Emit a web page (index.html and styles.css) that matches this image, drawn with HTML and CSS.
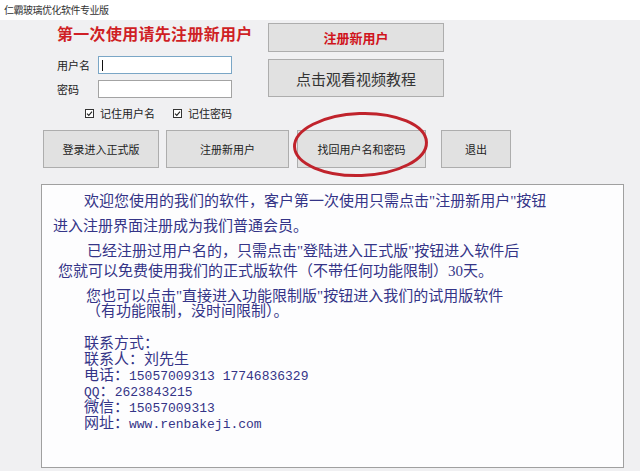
FILE: index.html
```html
<!DOCTYPE html>
<html lang="zh-CN">
<head>
  <meta charset="UTF-8" />
  <title>仁霸玻璃优化软件专业版</title>
  <link rel="stylesheet" href="styles.css">
</head>
<body>

<div class="titlebar">仁霸玻璃优化软件专业版</div>

<div class="window">

  <!-- 登录区 -->
  <div class="top">
    <div class="login">
      <h1 class="headline">第一次使用请先注册新用户</h1>
      <div class="field-row first">
        <label>用户名</label>
        <div class="field focused"><span class="caret"></span></div>
      </div>
      <div class="field-row">
        <label>密码</label>
        <div class="field"></div>
      </div>
      <div class="remember">
        <span class="check">
          <svg width="9" height="9" viewBox="0 0 9 9"><rect x="0.5" y="0.5" width="8" height="8" fill="#fff" stroke="#333"/><path d="M2 4.6 L3.8 6.4 L7 2.6" fill="none" stroke="#222" stroke-width="1.1"/></svg>
          记住用户名
        </span>
        <span class="check">
          <svg width="9" height="9" viewBox="0 0 9 9"><rect x="0.5" y="0.5" width="8" height="8" fill="#fff" stroke="#333"/><path d="M2 4.6 L3.8 6.4 L7 2.6" fill="none" stroke="#222" stroke-width="1.1"/></svg>
          记住密码
        </span>
      </div>
    </div>

    <div class="side">
      <button class="btn btn-red">注册新用户</button>
      <button class="btn btn-video">点击观看视频教程</button>
    </div>
  </div>

  <!-- 按钮行 -->
  <div class="actions">
    <button class="btn b-login">登录进入正式版</button>
    <button class="btn b-reg">注册新用户</button>
    <div class="marked">
      <button class="btn b-find">找回用户名和密码</button>
      <svg class="ring" width="137" height="67" viewBox="0 0 137 67"><ellipse cx="68.5" cy="33.5" rx="66" ry="31" fill="none" stroke="#c0232c" stroke-width="3"/></svg>
    </div>
    <button class="btn b-exit">退出</button>
  </div>

  <!-- 说明 -->
  <div class="notice">
    <div class="p1">欢迎您使用的我们的软件，客户第一次使用只需点击"注册新用户"按钮<br>进入注册界面注册成为我们普通会员。</div>
    <div class="p2">已经注册过用户名的，只需点击"登陆进入正式版"按钮进入软件后<br>您就可以免费使用我们的正式版软件（不带任何功能限制）30天。</div>
    <div class="p3">您也可以点击"直接进入功能限制版"按钮进入我们的试用版软件<br>（有功能限制，没时间限制）。</div>
    <div class="contact">
      联系方式：<br>
      联系人：刘先生<br>
      电话：<span class="latin">15057009313 17746836329</span><br>
      <span class="latin">QQ</span>：<span class="latin">2623843215</span><br>
      微信：<span class="latin">15057009313</span><br>
      网址：<span class="latin">www.renbakeji.com</span>
    </div>
  </div>

</div>

</body>
</html>
```

FILE: styles.css
```css
* { box-sizing: border-box; margin: 0; padding: 0; }

:root {
  --win:      #f0f0f2;
  --btn:      #e1e1e1;
  --btn-line: #adadad;
  --field:    #a3a3a3;
  --red:      #cf1f25;
  --navy:     #343487;
  --text:     #222;
}

body {
  font-family: "Noto Sans CJK SC", "Noto Sans", sans-serif;
  background: var(--win);
  color: var(--text);
  width: 640px;
  height: 471px;
  overflow: hidden;
}

.titlebar {
  height: 20px;
  background: #fff;
  padding-left: 4px;
  font-size: 10px;
  line-height: 20px;
  letter-spacing: -0.5px;
  color: #333;
}

/* ── 登录区 ───────────────────────────── */
.top {
  display: flex;
  padding: 3px 0 0 57px;
}

.login { width: 199px; }

.headline {
  margin-top: 2px;
  font: bold 16px/20px "Liberation Serif", "Noto Sans CJK SC", serif;
  letter-spacing: 0.3px;
  color: var(--red);
  white-space: nowrap;
}

.field-row {
  display: flex;
  align-items: center;
  height: 18px;
  margin-top: 6px;
}
.field-row.first { margin-top: 11px; }

.field-row label {
  width: 41px;
  font-size: 11px;
}

.field {
  width: 134px;
  height: 18px;
  background: #fff;
  border: 1px solid var(--field);
  display: flex;
  align-items: center;
}
.field.focused { border-color: #7aa6c6; }

.caret {
  width: 1px;
  height: 11px;
  margin-left: 3px;
  background: #111;
}

.remember {
  display: flex;
  align-items: center;
  gap: 18px;
  height: 14px;
  margin-top: 8px;
  padding-left: 28px;
  font-size: 11px;
}

.check {
  display: flex;
  align-items: center;
  gap: 6px;
  white-space: nowrap;
}

.side {
  display: flex;
  flex-direction: column;
  gap: 7px;
  margin-left: 12px;
}

/* ── 按钮 ─────────────────────────────── */
.btn {
  background: var(--btn);
  border: 1px solid var(--btn-line);
  font-family: "Noto Sans CJK SC", sans-serif;
  font-size: 11px;
  color: var(--text);
  height: 38px;
}

.btn-red {
  width: 176px;
  height: 29px;
  font: bold 13px "Liberation Serif", "Noto Sans CJK SC", serif;
  color: #d0141c;
}

.btn-video {
  width: 176px;
  height: 38px;
  font: 15px "Liberation Serif", "Noto Sans CJK SC", serif;
  color: #333;
}

.actions {
  display: flex;
  margin-top: 10px;
  padding-left: 43px;
}

.b-login { width: 116px; }
.b-reg   { width: 123px; margin-left: 7px; }
.marked  { position: relative; margin-left: 8px; }
.b-find  { width: 129px; }
.b-exit  { width: 70px; margin-left: 15px; }

.ring {
  position: absolute;
  left: -5px;
  top: -19px;
  transform: rotate(-2deg);
  pointer-events: none;
}

/* ── 说明框 ───────────────────────────── */
.notice {
  width: 583px;
  height: 284px;
  margin: 16px 0 0 41px;
  padding: 4px 0 0 11px;
  background: #fdfdfe;
  border: 1px solid #a0a0a0;
  font: 15px "Liberation Serif", "Noto Sans CJK SC", serif;
  color: var(--navy);
  white-space: nowrap;
}

.p1 { line-height: 25px; text-indent: 31px; }
.p2 { margin-top: 2px; line-height: 20px; padding-left: 5px; text-indent: 29px; }
.p3 { margin-top: 8px; line-height: 15px; padding-left: 33px; }
.contact { margin-top: 16px; line-height: 16px; padding-left: 31px; }

.latin { font: 13px/1 "Liberation Mono", monospace; }
```
